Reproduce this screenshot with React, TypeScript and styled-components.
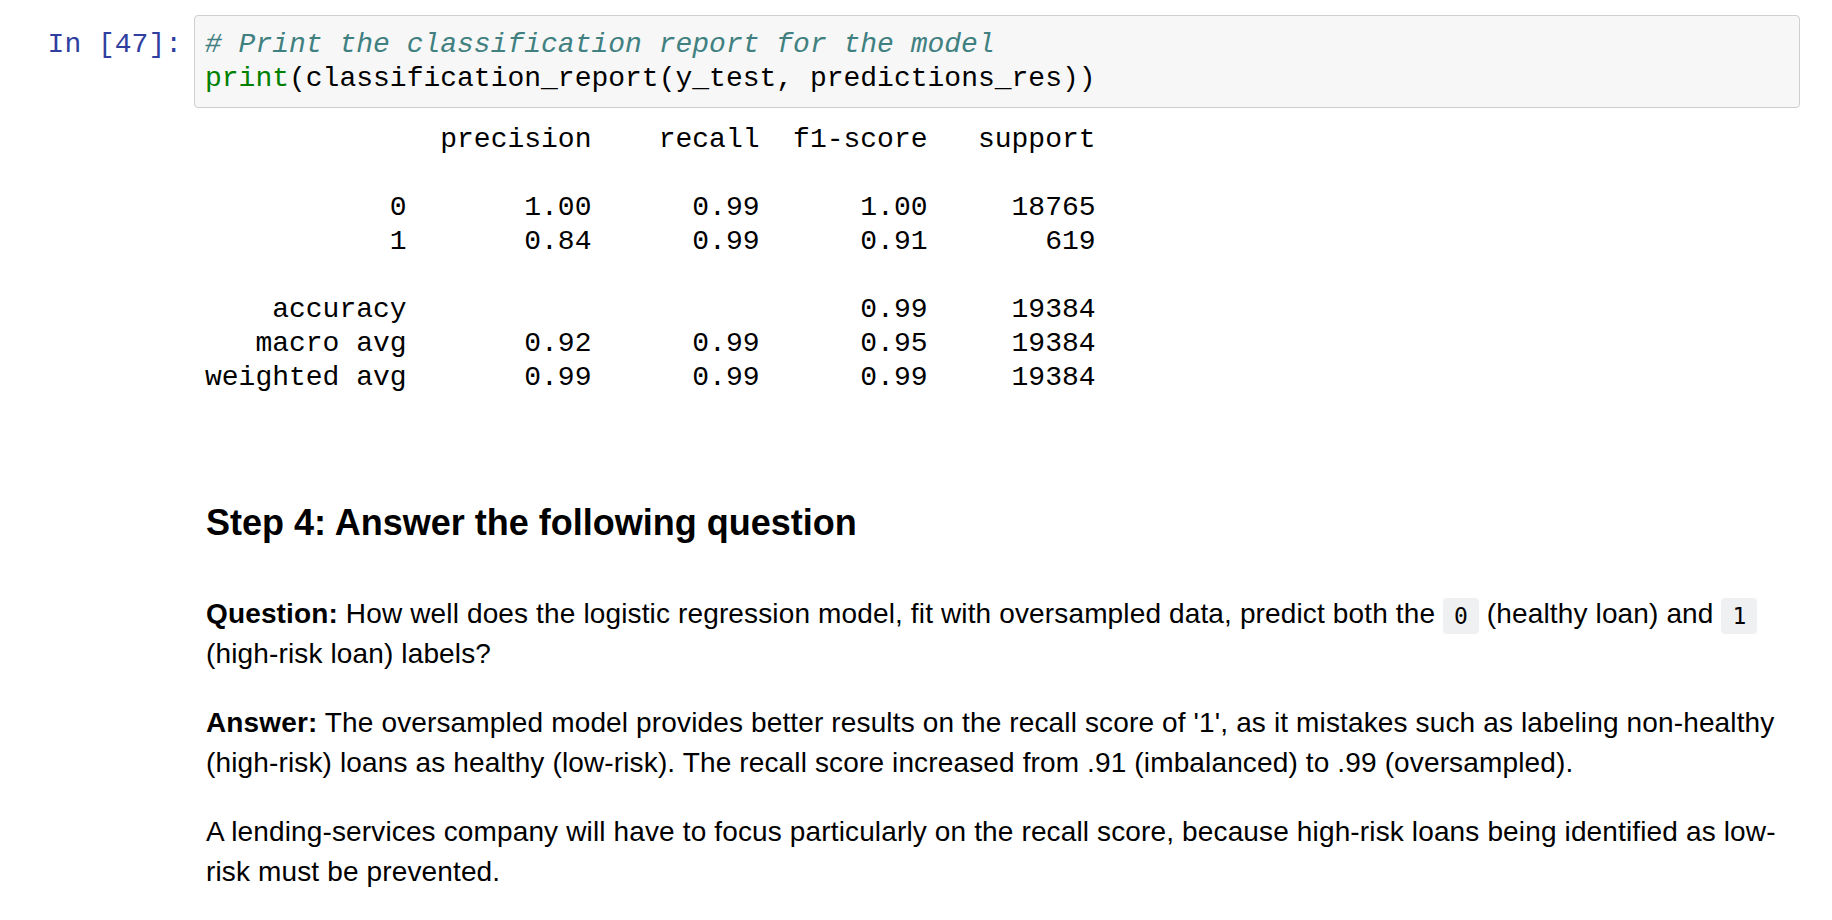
import React from "react";
import styled, { createGlobalStyle } from "styled-components";

const Global = createGlobalStyle`
  html, body { margin: 0; padding: 0; background: #ffffff; }
  body { font-family: "Liberation Sans", Arial, sans-serif; color: #000; }
`;

const Notebook = styled.div`
  display: flex;
  flex-direction: column;
  padding: 15px 32px 0 0;
`;

const Row = styled.div`
  display: flex;
  align-items: flex-start;
`;

const Prompt = styled.div`
  flex: 0 0 194px;
  box-sizing: border-box;
  padding: 13px 12px 0 0;
  text-align: right;
  font-family: "Liberation Mono", "Courier New", monospace;
  font-size: 28px;
  line-height: 34px;
  color: #303f9f;
  white-space: pre;
`;

const InputArea = styled.div`
  flex: 1;
  background: #f7f7f7;
  border: 1px solid #cfcfcf;
  border-radius: 4px;
  padding: 12px 10px 11px 10px;
  font-family: "Liberation Mono", "Courier New", monospace;
  font-size: 28px;
  line-height: 34px;
  color: #000;
  white-space: pre;
`;

const Comment = styled.span`
  color: #408080;
  font-style: italic;
`;

const Builtin = styled.span`
  color: #008000;
`;

const OutputPre = styled.pre`
  flex: 1;
  margin: 15px 0 0 0;
  padding-left: 11px;
  font-family: "Liberation Mono", "Courier New", monospace;
  font-size: 28px;
  line-height: 34px;
  color: #000;
`;

const Markdown = styled.div`
  flex: 1;
  padding: 0 4px 0 12px;
  font-size: 28px;
  line-height: 40px;
  letter-spacing: 0.14px;
  color: #000;
`;

const Heading = styled.h3`
  margin: 72px 0 0 0;
  font-size: 36px;
  line-height: 43px;
  font-weight: 700;
  letter-spacing: 0;
`;

const Para = styled.p<{ $first?: boolean }>`
  margin: ${(p) => (p.$first ? "50px" : "29px")} 0 0 0;
`;

const InlineCode = styled.code`
  display: inline-block;
  height: 36px;
  line-height: 36px;
  padding: 0 11px;
  border-radius: 4px;
  background: #eff0f1;
  font-family: "DejaVu Sans Mono", "Liberation Mono", monospace;
  font-size: 23px;
  letter-spacing: 0;
  vertical-align: middle;
`;

const report = `              precision    recall  f1-score   support

           0       1.00      0.99      1.00     18765
           1       0.84      0.99      0.91       619

    accuracy                           0.99     19384
   macro avg       0.92      0.99      0.95     19384
weighted avg       0.99      0.99      0.99     19384

`;

export default function App() {
  return (
    <>
      <Global />
      <Notebook>
        <Row>
          <Prompt>In [47]:</Prompt>
          <InputArea>
            <Comment># Print the classification report for the model</Comment>
            {"\n"}
            <Builtin>print</Builtin>(classification_report(y_test, predictions_res))
          </InputArea>
        </Row>
        <Row>
          <Prompt />
          <OutputPre>{report}</OutputPre>
        </Row>
        <Row>
          <Prompt />
          <Markdown>
            <Heading>Step 4: Answer the following question</Heading>
            <Para $first>
              <strong>Question:</strong> How well does the logistic regression model, fit with
              oversampled data, predict both the <InlineCode>0</InlineCode> (healthy loan) and{" "}
              <InlineCode>1</InlineCode> (high-risk loan) labels?
            </Para>
            <Para>
              <strong>Answer:</strong> The oversampled model provides better results on the recall
              score of '1', as it mistakes such as labeling non-healthy (high-risk) loans as healthy
              (low-risk). The recall score increased from .91 (imbalanced) to .99 (oversampled).
            </Para>
            <Para>
              A lending-services company will have to focus particularly on the recall score, because
              high-risk loans being identified as low-risk must be prevented.
            </Para>
          </Markdown>
        </Row>
      </Notebook>
    </>
  );
}
